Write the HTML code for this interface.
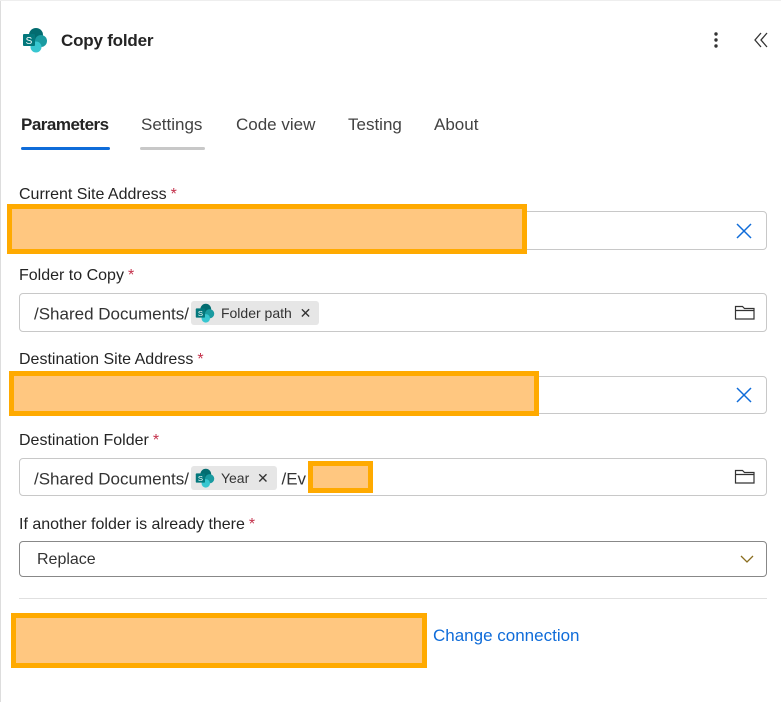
<!DOCTYPE html>
<html><head><meta charset="utf-8"><style>
body{margin:0;width:781px;height:702px;background:#fff;font-family:"Liberation Sans",sans-serif;color:#242424;position:relative;overflow:hidden}
.a{position:absolute}
.lbl{position:absolute;left:19px;font-size:16px;color:#242424}
.lbl b{color:#c4314b;font-weight:normal;margin-left:4px}
.inp{position:absolute;left:19px;width:748px;border:1px solid #c8c8c8;border-radius:4px;background:#fff;box-sizing:border-box}
.or{position:absolute;background:#ffc780;border:5px solid #ffaa00;box-sizing:border-box}
.txt{position:absolute;left:14px;font-size:17px;color:#333;white-space:nowrap}
.chip{display:inline-block;background:#e6e6e6;border-radius:3px;padding:0 8px 0 4px;font-size:14px;height:24px;line-height:24px;vertical-align:middle;margin-left:2px;position:relative;top:-2px}
.tab{position:absolute;top:115px;font-size:17px;color:#424242}
</style></head><body>
<div class="a" style="left:0;top:0;width:1px;height:702px;background:#ddd"></div>
<div class="a" style="left:0;top:0;width:781px;height:1px;background:#eee"></div>
<svg class="a" style="left:22px;top:27px" width="26" height="26" viewBox="0 0 26 26"><circle cx="14" cy="8" r="7" fill="#036c70"/><circle cx="19" cy="14" r="6" fill="#1a9ba1"/><circle cx="14" cy="20" r="5.5" fill="#37c6d0"/><rect x="1" y="7" width="12" height="12" rx="1" fill="#03787c"/><text x="7" y="17" font-size="10" fill="#fff" text-anchor="middle" font-family="Liberation Sans">S</text></svg>
<div class="a" style="left:61px;top:31px;font-size:17px;font-weight:bold;color:#242424;letter-spacing:-0.2px">Copy folder</div>
<svg class="a" style="left:710px;top:30px" width="12" height="20"><circle cx="6" cy="4" r="1.7" fill="#333"/><circle cx="6" cy="10" r="1.7" fill="#333"/><circle cx="6" cy="16" r="1.7" fill="#333"/></svg>
<svg class="a" style="left:753px;top:31px" width="16" height="18"><path d="M8 2L2 9l6 7M14 2L8 9l6 7" fill="none" stroke="#333" stroke-width="1.3"/></svg>
<div class="tab" style="left:21px;font-weight:bold;color:#242424;letter-spacing:-0.5px">Parameters</div>
<div class="tab" style="left:141px">Settings</div>
<div class="tab" style="left:236px">Code view</div>
<div class="tab" style="left:348px">Testing</div>
<div class="tab" style="left:434px">About</div>
<div class="a" style="left:21px;top:147px;width:89px;height:3px;background:#0f6cd9;border-radius:2px"></div>
<div class="a" style="left:140px;top:147px;width:65px;height:3px;background:#c8c8c8;border-radius:2px"></div>

<div class="lbl" style="top:186px">Current Site Address<b>*</b></div>
<div class="inp" style="top:211px;height:39px"></div>
<svg class="a" style="left:736px;top:223px" width="16" height="16"><path d="M1 1L15 15M15 1L1 15" stroke="#0f6cd9" stroke-width="1.5"/></svg>
<div class="or" style="left:7px;top:204px;width:520px;height:50px"></div>

<div class="lbl" style="top:267px">Folder to Copy<b>*</b></div>
<div class="inp" style="top:293px;height:39px"><div class="txt" style="top:9px">/Shared Documents/<span class="chip"><svg width="20" height="20" viewBox="0 0 26 26" style="vertical-align:-5px;margin-right:6px"><circle cx="14" cy="8" r="7" fill="#036c70"/><circle cx="19" cy="14" r="6" fill="#1a9ba1"/><circle cx="14" cy="20" r="5.5" fill="#37c6d0"/><rect x="1" y="7" width="12" height="12" rx="1" fill="#03787c"/><text x="7" y="17" font-size="10" fill="#fff" text-anchor="middle">S</text></svg>Folder path &nbsp;✕</span></div></div>
<svg class="a" style="left:734px;top:303px" width="22" height="18"><path d="M1.5 3.5h7l2 2h9.5v10.5h-18.5z M1.5 7.5h18.5" fill="none" stroke="#333" stroke-width="1.2"/></svg>

<div class="lbl" style="top:351px">Destination Site Address<b>*</b></div>
<div class="inp" style="top:376px;height:38px"></div>
<svg class="a" style="left:736px;top:387px" width="16" height="16"><path d="M1 1L15 15M15 1L1 15" stroke="#0f6cd9" stroke-width="1.5"/></svg>
<div class="or" style="left:9px;top:371px;width:530px;height:45px"></div>

<div class="lbl" style="top:432px">Destination Folder<b>*</b></div>
<div class="inp" style="top:458px;height:38px"><div class="txt" style="top:9px">/Shared Documents/<span class="chip"><svg width="20" height="20" viewBox="0 0 26 26" style="vertical-align:-5px;margin-right:6px"><circle cx="14" cy="8" r="7" fill="#036c70"/><circle cx="19" cy="14" r="6" fill="#1a9ba1"/><circle cx="14" cy="20" r="5.5" fill="#37c6d0"/><rect x="1" y="7" width="12" height="12" rx="1" fill="#03787c"/><text x="7" y="17" font-size="10" fill="#fff" text-anchor="middle">S</text></svg>Year &nbsp;✕</span> /Ev</div></div>
<svg class="a" style="left:734px;top:467px" width="22" height="18"><path d="M1.5 3.5h7l2 2h9.5v10.5h-18.5z M1.5 7.5h18.5" fill="none" stroke="#333" stroke-width="1.2"/></svg>
<div class="or" style="left:308px;top:461px;width:65px;height:32px"></div>

<div class="lbl" style="top:516px">If another folder is already there<b>*</b></div>
<div class="inp" style="top:541px;height:36px;border-color:#888"><div class="txt" style="left:17px;top:9px;font-size:16px">Replace</div></div>
<svg class="a" style="left:740px;top:554px" width="14" height="10"><path d="M1 2l6 6 6-6" fill="none" stroke="#8a6d1f" stroke-width="1.3"/></svg>

<div class="a" style="left:19px;top:598px;width:748px;height:1px;background:#e0e0e0"></div>
<div class="or" style="left:11px;top:613px;width:416px;height:55px"></div>
<div class="a" style="left:433px;top:626px;font-size:17px;color:#0f6cd9">Change connection</div>
</body></html>
